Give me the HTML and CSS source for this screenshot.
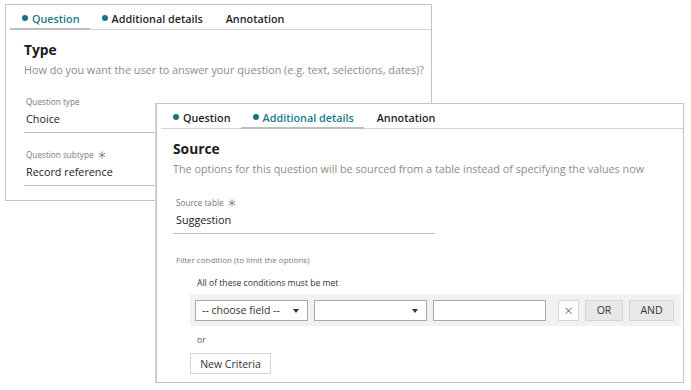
FILE: index.html
```html
<!DOCTYPE html>
<html lang="en">
<head>
  <meta charset="UTF-8" />
  <meta name="viewport" content="width=device-width, initial-scale=1.0" />
  <title>Question settings</title>
  <link rel="stylesheet" href="styles.css">
</head>
<body>
  <div class="canvas">
    <div class="window window-type">
      <div class="tabs">
        <div class="tab active"><span class="dot"></span>Question</div>
        <div class="tab"><span class="dot"></span>Additional details</div>
        <div class="tab">Annotation</div>
      </div>
      <div class="content">
        <h2 class="heading">Type</h2>
        <p class="desc">How do you want the user to answer your question (e.g. text, selections, dates)?</p>
        <div class="field field-first">
          <div class="label">Question type</div>
          <div class="value">Choice</div>
        </div>
        <div class="field">
          <div class="label">Question subtype <svg class="req" viewBox="0 0 10 10"><path d="M5 0.5V9.5M1.1 2.75L8.9 7.25M1.1 7.25L8.9 2.75"/></svg></div>
          <div class="value">Record reference</div>
        </div>
      </div>
    </div>

    <div class="window window-source">
      <div class="tabs">
        <div class="tab"><span class="dot"></span>Question</div>
        <div class="tab active"><span class="dot"></span>Additional details</div>
        <div class="tab">Annotation</div>
      </div>
      <div class="content">
        <h2 class="heading">Source</h2>
        <p class="desc">The options for this question will be sourced from a table instead of specifying the values now</p>
        <div class="field field-source">
          <div class="label">Source table <svg class="req" viewBox="0 0 10 10"><path d="M5 0.5V9.5M1.1 2.75L8.9 7.25M1.1 7.25L8.9 2.75"/></svg></div>
          <div class="value">Suggestion</div>
        </div>

        <div class="filter-label">Filter condition (to limit the options)</div>
        <div class="filter">
          <div class="filter-title">All of these conditions must be met</div>
          <div class="criteria">
            <div class="select">-- choose field --<span class="caret"></span></div>
            <div class="select"><span class="caret"></span></div>
            <div class="input"></div>
            <button class="btn btn-remove">&times;</button>
            <button class="btn btn-gray">OR</button>
            <button class="btn btn-gray">AND</button>
          </div>
          <div class="or">or</div>
          <button class="btn btn-new">New Criteria</button>
        </div>
      </div>
    </div>
  </div>
</body>
</html>
```

FILE: styles.css
```css
* {
  box-sizing: border-box;
}

body {
  margin: 0;
  background: #fff;
  font-family: "Open Sans", "Noto Sans", sans-serif;
  color: #222;
}

.canvas {
  position: relative;
  width: 691px;
  height: 390px;
}

/* windows sit freely on the canvas and overlap */
.window {
  position: absolute;
  background: #fff;
  border: 1px solid #c4c4c4;
}

.window-type {
  left: 5px;
  top: 4px;
  width: 427px;
  height: 197px;
}

.window-source {
  left: 156px;
  top: 103px;
  width: 528px;
  height: 280px;
  box-shadow: -1px 0 0 #d6d6d6;
}

.tabs {
  display: flex;
  margin-left: 4px;
  height: 25px;
  border-bottom: 1px solid #d4d4d4;
}

.tab {
  display: flex;
  align-items: center;
  gap: 4px;
  padding: 3px 10px 0 12px;
  font-size: 10.8px;
  font-weight: 600;
  color: #1f1f1f;
  margin-bottom: -1px;
  border-bottom: 2px solid transparent;
  white-space: nowrap;
}

.tab:last-child {
  padding-left: 13px;
}

.tab.active {
  color: #187a8c;
  border-bottom-color: #b9bec0;
}

.dot {
  width: 6px;
  height: 6px;
  border-radius: 50%;
  background: #127487;
}

.content {
  padding: 10px 18px 0;
}

.window-source .content {
  padding: 10px 16px 0;
}

.heading {
  margin: 0;
  font-size: 13.8px;
  font-weight: 700;
  line-height: 20px;
  color: #1a1a1a;
}

.desc {
  margin: 1px 0 0;
  font-size: 10.8px;
  line-height: 18px;
  color: #8c8c8c;
  white-space: nowrap;
}

.field {
  width: 395px;
  margin-top: 16px;
  padding: 0 2px 2px;
  border-bottom: 1px solid #bcc2c4;
}

.field-first {
  margin-top: 17px;
}

.field-source {
  width: 262px;
  margin-top: 19px;
  padding-left: 3px;
}

.label {
  display: flex;
  align-items: center;
  gap: 4px;
  font-size: 8.2px;
  line-height: 12px;
  color: #7a7a7a;
}

.req {
  width: 8px;
  height: 8px;
  stroke: #6d6d6d;
  stroke-width: 1;
  fill: none;
}

.value {
  font-size: 10.8px;
  line-height: 22px;
  color: #222;
}

.filter-label {
  margin-top: 20px;
  padding-left: 3px;
  font-size: 8px;
  line-height: 12px;
  color: #7a7a7a;
}

.filter {
  padding-left: 17px;
}

.filter-title {
  margin-top: 11px;
  padding-left: 7px;
  font-size: 8.6px;
  line-height: 12px;
  color: #333;
}

.criteria {
  display: flex;
  align-items: center;
  gap: 6px;
  width: 491px;
  height: 32px;
  margin-top: 5px;
  padding-left: 5px;
  background: #f1f1f1;
}

.select,
.input {
  position: relative;
  display: flex;
  align-items: center;
  width: 113px;
  height: 21px;
  padding-left: 6px;
  background: #fff;
  border: 1px solid #a9a9a9;
  font-size: 10.5px;
  color: #333;
  white-space: nowrap;
}

.select {
  padding-right: 20px;
}

.caret {
  position: absolute;
  right: 8px;
  top: 8px;
  border-left: 3px solid transparent;
  border-right: 3px solid transparent;
  border-top: 4px solid #333;
}

.btn {
  height: 21px;
  padding: 0;
  border: 1px solid #d5d5d5;
  background: #fff;
  font-family: inherit;
  font-size: 10.5px;
  color: #333;
  cursor: pointer;
}

.btn-remove {
  width: 21px;
  margin-left: 6px;
  font-size: 15px;
  font-weight: 300;
  line-height: 1;
  color: #555;
}

.btn-gray {
  width: 38px;
  background: #e8e8e8;
}

.btn-gray:last-child {
  width: 45px;
}

.or {
  margin-top: 8px;
  padding-left: 7px;
  font-size: 8.6px;
  line-height: 12px;
  color: #555;
}

.btn-new {
  display: block;
  width: 81px;
  margin-top: 7px;
  font-size: 10.5px;
}
```
